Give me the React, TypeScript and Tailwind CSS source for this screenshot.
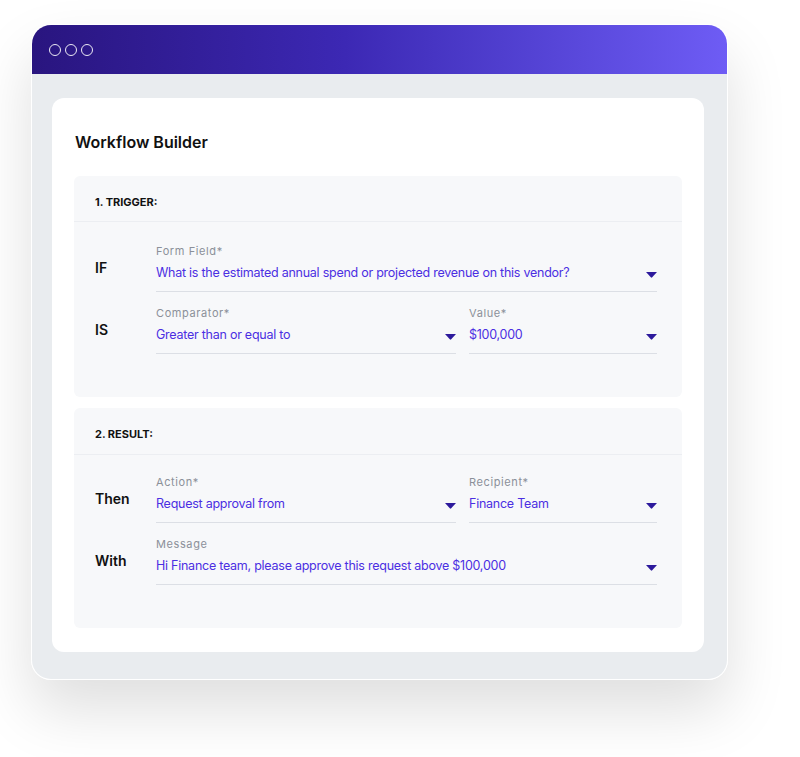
const Caret = () => (
  <svg width="11" height="6" viewBox="0 0 11 6" className="mt-[3px] shrink-0">
    <path d="M0 0H11L6.2 5.3Q5.5 6 4.8 5.3Z" fill="#2d1a9c" />
  </svg>
);

function Field({ label, value, width }: { label: string; value: string; width: string }) {
  return (
    <div className={`${width} shrink-0`}>
      <div className="text-[11px] leading-[14px] tracking-[0.6px] text-[#8b9099]">{label}</div>
      <div className="mt-[5px] flex items-center justify-between border-b border-[#dcdfe5] pb-[8px]">
        <span className="text-[12.5px] leading-5 tracking-[-0.25px] text-[#4b2fe2]">{value}</span>
        <Caret />
      </div>
    </div>
  );
}

function Row({ name, children }: { name: string; children: React.ReactNode }) {
  return (
    <div className="flex items-start">
      <div className="mt-[14px] w-[61px] shrink-0 text-[14px] font-semibold leading-5 text-[#111]">{name}</div>
      <div className="flex gap-[13px]">{children}</div>
    </div>
  );
}

function Section({ title, head, top, children }: { title: string; head: string; top: string; children: React.ReactNode }) {
  return (
    <section className="rounded-md bg-[#f7f8fa]">
      <div className={`${head} border-b border-[#eceef2] px-[21px] pt-[19px] text-[11px] font-bold leading-[14px] text-[#111]`}>{title}</div>
      <div className={`flex flex-col gap-[14px] px-[21px] pb-[43px] ${top}`}>{children}</div>
    </section>
  );
}

export default function App() {
  return (
    <div className="min-h-[757px] bg-white pl-[31px] pt-[24px]" style={{ fontFamily: 'Inter, "Noto Sans", sans-serif' }}>
      <div className="w-[697px] overflow-hidden rounded-[20px] border border-white shadow-[0_30px_60px_rgba(0,0,0,0.13)]">
        <div className="flex h-[49px] items-center gap-[4px] bg-gradient-to-r from-[#29157f] via-[#3c28b4] via-45% to-[#6e5cf5] pl-[17px]">
          <span className="h-[12px] w-[12px] rounded-full border-[1.5px] border-white/90" />
          <span className="h-[12px] w-[12px] rounded-full border-[1.5px] border-white/90" />
          <span className="h-[12px] w-[12px] rounded-full border-[1.5px] border-white/90" />
        </div>
        <div className="bg-[#e9ecef] pb-[27px] pl-[20px] pr-[23px] pt-[24px]">
          <div className="h-[554px] rounded-xl bg-white px-[22px] pt-[32px]">
            <h1 className="pl-px text-[16px] font-semibold leading-6 text-[#111]">Workflow Builder</h1>
            <div className="mt-[22px] flex flex-col gap-[11px]">
              <Section title="1. TRIGGER:" head="h-[46px]" top="pt-[22px]">
                <Row name="IF">
                  <Field label="Form Field*" value="What is the estimated annual spend or projected revenue on this vendor?" width="w-[501px]" />
                </Row>
                <Row name="IS">
                  <Field label="Comparator*" value="Greater than or equal to" width="w-[300px]" />
                  <Field label="Value*" value="$100,000" width="w-[188px]" />
                </Row>
              </Section>
              <Section title="2. RESULT:" head="h-[47px]" top="pt-[20px]">
                <Row name="Then">
                  <Field label="Action*" value="Request approval from" width="w-[300px]" />
                  <Field label="Recipient*" value="Finance Team" width="w-[188px]" />
                </Row>
                <Row name="With">
                  <Field label="Message" value="Hi Finance team, please approve this request above $100,000" width="w-[501px]" />
                </Row>
              </Section>
            </div>
          </div>
        </div>
      </div>
    </div>
  );
}
